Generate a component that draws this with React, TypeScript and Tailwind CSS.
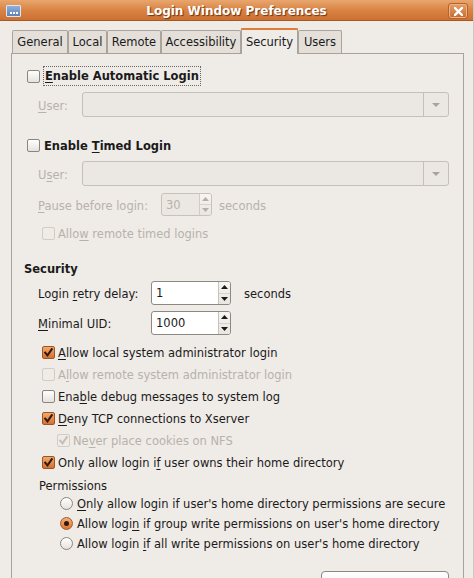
import React from 'react'

const FONT = "font-['DejaVu_Sans','Noto_Sans',sans-serif]"
// nudges text down so it sits on the row's centre like GTK does
const T = 'relative top-[2px]'

function CheckMark({ color }: { color: string }) {
  return (
    <svg width="11" height="11" viewBox="0 0 11 11" className="absolute left-[0px] top-[0px]">
      <path d="M2.2 5.6 L4.5 8.3 L8.8 2.2" fill="none" stroke={color} strokeWidth="2" strokeLinecap="square" />
    </svg>
  )
}

function Check({ checked, disabled }: { checked?: boolean; disabled?: boolean }) {
  if (disabled) {
    return (
      <span className="relative block w-[13px] h-[13px] shrink-0 rounded-[2px] border border-[#d2ccc4] bg-[#efebe7]">
        {checked && <CheckMark color="#c4beb6" />}
      </span>
    )
  }
  if (checked) {
    return (
      <span className="relative block w-[13px] h-[13px] shrink-0 rounded-[2px] border border-[#9d5525] bg-gradient-to-b from-[#f2a86c] to-[#d96f2d]">
        <CheckMark color="#2b1a0e" />
      </span>
    )
  }
  return (
    <span className="relative block w-[13px] h-[13px] shrink-0 rounded-[2px] border border-[#8a857f] bg-gradient-to-b from-white to-[#e6e2dd]" />
  )
}

function Radio({ selected }: { selected?: boolean }) {
  if (selected) {
    return (
      <span className="flex items-center justify-center w-[13px] h-[13px] shrink-0 rounded-full border border-[#a55a26] bg-gradient-to-b from-[#f4b07a] to-[#dc7430]">
        <span className="block w-[5px] h-[5px] rounded-full bg-[#2b1a0e]" />
      </span>
    )
  }
  return (
    <span className="block w-[13px] h-[13px] shrink-0 rounded-full border border-[#8a857f] bg-gradient-to-b from-white to-[#e6e2dd]" />
  )
}

function Combo() {
  return (
    <div className="flex w-[367px] h-[25px] rounded-[3px] border border-[#c5bfb7] bg-[#ebe7e3]">
      <div className="flex-1" />
      <div className="w-[25px] border-l border-[#c5bfb7] flex items-center justify-center">
        <svg width="8" height="4" viewBox="0 0 8 4">
          <path d="M0 0 L8 0 L4 4 Z" fill="#a9a39b" />
        </svg>
      </div>
    </div>
  )
}

function Spin({ value, width, disabled }: { value: string; width: string; disabled?: boolean }) {
  const border = disabled ? 'border-[#c8c2ba]' : 'border-[#8d8882]'
  const arrow = disabled ? '#b5afa7' : '#1a1a1a'
  return (
    <div className={`flex h-full rounded-[3px] border ${border} ${width} ${disabled ? 'bg-[#ebe7e3] text-[#b8b2aa]' : 'bg-white text-[#1a1a1a]'}`}>
      <div className="flex-1 flex items-center pl-[4px]">
        <span className="relative top-[1px]">{value}</span>
      </div>
      <div className={`w-[12px] flex flex-col border-l ${disabled ? 'border-[#d2ccc4]' : 'border-[#c8c2ba]'} bg-gradient-to-b from-[#f7f5f2] to-[#e9e5e0] rounded-r-[2px]`}>
        <div className="flex-1 flex items-center justify-center">
          <svg width="7" height="4" viewBox="0 0 7 4">
            <path d="M0 4 L7 4 L3.5 0 Z" fill={arrow} />
          </svg>
        </div>
        <div className="flex-1 flex items-center justify-center border-t border-[#d8d3cc]">
          <svg width="7" height="4" viewBox="0 0 7 4">
            <path d="M0 0 L7 0 L3.5 4 Z" fill={arrow} />
          </svg>
        </div>
      </div>
    </div>
  )
}

function CheckRow({
  children,
  checked,
  disabled,
  indent = 'pl-[30px]',
}: {
  children: React.ReactNode
  checked?: boolean
  disabled?: boolean
  indent?: string
}) {
  return (
    <div className={`flex items-center h-[22px] ${indent}`}>
      <Check checked={checked} disabled={disabled} />
      <span className={`ml-[3px] whitespace-nowrap ${T} ${disabled ? 'text-[#b8b2aa]' : 'text-[#1a1a1a]'}`}>{children}</span>
    </div>
  )
}

function RadioRow({ children, selected }: { children: React.ReactNode; selected?: boolean }) {
  return (
    <div className="flex items-center h-[20px] pl-[48px]">
      <Radio selected={selected} />
      <span className={`ml-[4px] whitespace-nowrap text-[#1a1a1a] ${T}`}>{children}</span>
    </div>
  )
}

const tabs = [
  { name: 'General', w: 'w-[56px]' },
  { name: 'Local', w: 'w-[39px]' },
  { name: 'Remote', w: 'w-[54px]' },
  { name: 'Accessibility', w: 'w-[80px]' },
  { name: 'Security', w: 'w-[57px]', active: true },
  { name: 'Users', w: 'w-[44px]' },
]

export default function App() {
  return (
    <div className={`w-[474px] h-[578px] overflow-hidden bg-[#efebe7] text-[11.5px] leading-none ${FONT} border-r border-[#cfc9c1]`}>
      {/* title bar */}
      <div className="relative flex items-center justify-center h-[21px] bg-gradient-to-b from-[#e8a66e] via-[#d98443] to-[#cc7033] border-b border-[#a9561f]">
        <span className="absolute left-[6px] top-[5px] flex items-end justify-center w-[15px] h-[12px] rounded-[1px] border border-[#dfe6f0] bg-gradient-to-b from-[#8fb0dc] to-[#5f82b8] pb-[2px] gap-[1px]">
          <span className="block w-[2px] h-[2px] bg-white" />
          <span className="block w-[2px] h-[2px] bg-white" />
          <span className="block w-[2px] h-[2px] bg-white" />
        </span>
        <span className="relative top-[1px] font-bold text-white text-[12px] [text-shadow:1px_1px_1px_#6a3410]">Login Window Preferences</span>
        <span className="absolute left-[448px] top-[3px] flex items-center justify-center w-[20px] h-[16px] rounded-[3px] border border-[#b86228] bg-gradient-to-b from-[#e5a06a] to-[#c86a2c] shadow-[inset_0_0_0_1px_#eab286]">
          <svg width="9" height="9" viewBox="0 0 9 9">
            <path d="M1 1 L8 8 M8 1 L1 8" stroke="#ffffff" strokeWidth="2.4" strokeLinecap="square" />
          </svg>
        </span>
      </div>

      {/* tabs */}
      <div className="flex items-end h-[32px] pl-[12px] relative z-10">
        {tabs.map((t) =>
          t.active ? (
            <div
              key={t.name}
              className={`${t.w} h-[26px] -mb-[1px] flex items-center justify-center border-x border-[#a8a29b] bg-[#efebe7] text-[#1a1a1a] relative whitespace-nowrap`}
            >
              <span className="absolute left-[-1px] right-[-1px] top-0 h-[2px] bg-[#e07c38] rounded-t-[2px]" />
              <span className="relative top-[2px]">{t.name}</span>
            </div>
          ) : (
            <div
              key={t.name}
              className={`${t.w} h-[23px] flex items-center justify-center border-x border-t border-[#aaa49d] bg-[#e4dfd9] text-[#1a1a1a] rounded-t-[2px] whitespace-nowrap`}
            >
              <span className="relative top-[1px]">{t.name}</span>
            </div>
          ),
        )}
      </div>

      {/* notebook page */}
      <div className="ml-[11px] w-[453px] h-[600px] border border-[#a8a29b] bg-[#efebe7]">
        <div className="mt-[11px] flex items-center h-[22px] pl-[15px]">
          <Check />
          <span className="ml-[3px] px-[1px] h-[20px] flex items-center border border-dotted border-[#6b665f] font-bold text-[#1a1a1a] whitespace-nowrap">
            <span className="relative top-[1px]"><span className="underline underline-offset-2">E</span>nable Automatic Login</span>
          </span>
        </div>

        <div className="mt-[5px] flex items-center h-[25px] pl-[26px]">
          <span className={`w-[44px] text-[#b8b2aa] ${T}`}><span className="underline underline-offset-2">U</span>ser:</span>
          <Combo />
        </div>

        <div className="mt-[17px] flex items-center h-[22px] pl-[15px]">
          <Check />
          <span className={`ml-[4px] font-bold text-[#1a1a1a] whitespace-nowrap ${T}`}>
            Enable <span className="underline underline-offset-2">T</span>imed Login
          </span>
        </div>

        <div className="mt-[5px] flex items-center h-[25px] pl-[26px]">
          <span className={`w-[44px] text-[#b8b2aa] ${T}`}>U<span className="underline underline-offset-2">s</span>er:</span>
          <Combo />
        </div>

        <div className="mt-[7px] flex items-center h-[23px] pl-[26px]">
          <span className={`w-[123px] text-[#b8b2aa] whitespace-nowrap ${T}`}><span className="underline underline-offset-2">P</span>ause before login:</span>
          <Spin value="30" width="w-[51px]" disabled />
          <span className={`ml-[7px] text-[#b8b2aa] ${T}`}>seconds</span>
        </div>

        <div className="mt-[6px]">
          <CheckRow disabled>
            Allo<span className="underline underline-offset-2">w</span> remote timed logins
          </CheckRow>
        </div>

        <div className="mt-[13px] flex items-center h-[22px] pl-[12px] font-bold text-[#1a1a1a]">
          <span className={T}>Security</span>
        </div>

        <div className="mt-[2px] flex items-center h-[24px] pl-[26px]">
          <span className={`w-[113px] text-[#1a1a1a] whitespace-nowrap ${T}`}>Login <span className="underline underline-offset-2">r</span>etry delay:</span>
          <Spin value="1" width="w-[80px]" />
          <span className={`ml-[13px] text-[#1a1a1a] ${T}`}>seconds</span>
        </div>

        <div className="mt-[6px] flex items-center h-[24px] pl-[26px]">
          <span className={`w-[113px] text-[#1a1a1a] whitespace-nowrap ${T}`}><span className="underline underline-offset-2">M</span>inimal UID:</span>
          <Spin value="1000" width="w-[80px]" />
        </div>

        <div className="mt-[6px]">
          <CheckRow checked>
            <span className="underline underline-offset-2">A</span>llow local system administrator login
          </CheckRow>
          <CheckRow disabled>
            A<span className="underline underline-offset-2">l</span>low remote system administrator login
          </CheckRow>
          <CheckRow>
            Ena<span className="underline underline-offset-2">b</span>le debug messages to system log
          </CheckRow>
          <CheckRow checked>
            <span className="underline underline-offset-2">D</span>eny TCP connections to Xserver
          </CheckRow>
          <CheckRow checked disabled indent="pl-[45px]">
            Ne<span className="underline underline-offset-2">v</span>er place cookies on NFS
          </CheckRow>
          <CheckRow checked>
            Only allow login i<span className="underline underline-offset-2">f</span> user owns their home directory
          </CheckRow>
        </div>

        <div className="mt-[4px] flex items-center h-[16px] pl-[27px] text-[#1a1a1a]">
          <span className={T}>Permissions</span>
        </div>

        <RadioRow>
          <span className="underline underline-offset-2">O</span>nly allow login if user's home directory permissions are secure
        </RadioRow>
        <RadioRow selected>
          Allow logi<span className="underline underline-offset-2">n</span> if group write permissions on user's home directory
        </RadioRow>
        <RadioRow>
          Allow login <span className="underline underline-offset-2">i</span>f all write permissions on user's home directory
        </RadioRow>

        <div className="mt-[18px] ml-[309px] w-[128px] h-[30px] rounded-[4px] border border-[#8d8882] bg-gradient-to-b from-white to-[#ebe7e2]" />
      </div>
    </div>
  )
}
